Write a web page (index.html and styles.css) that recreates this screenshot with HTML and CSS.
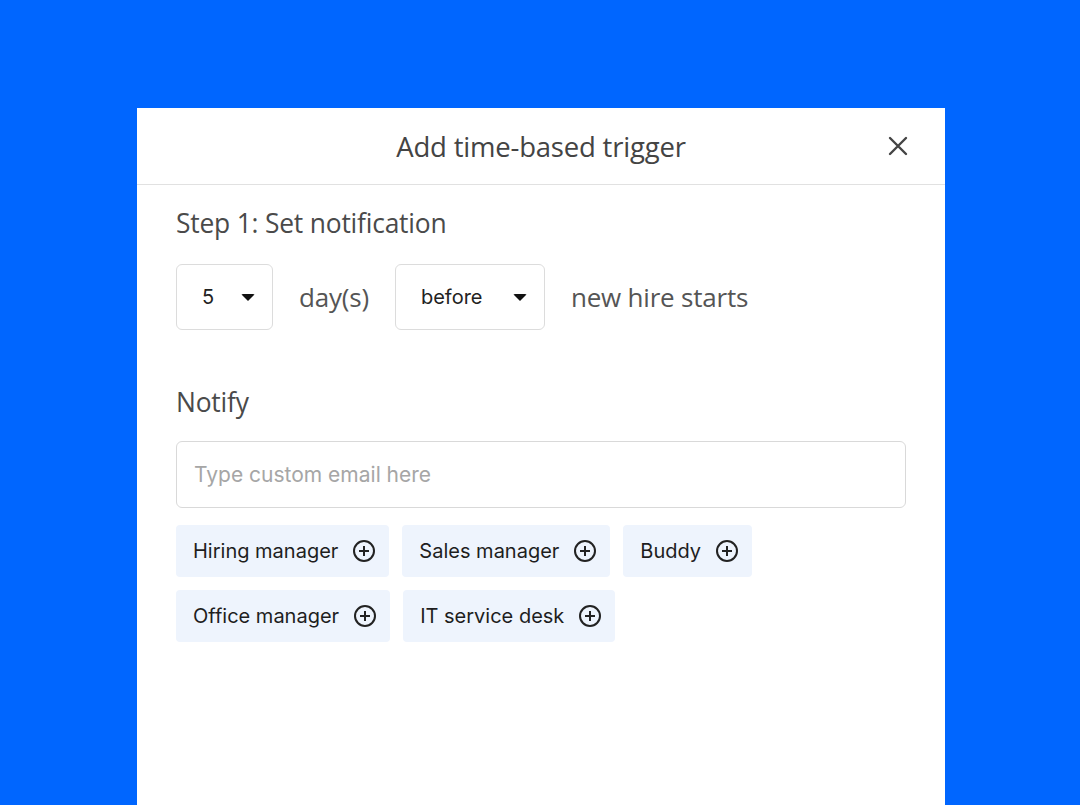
FILE: index.html
```html
<!DOCTYPE html>
<html lang="en">
<head>
  <meta charset="UTF-8">
  <meta name="viewport" content="width=device-width, initial-scale=1.0">
  <title>Add time-based trigger</title>
  <link rel="stylesheet" href="styles.css">
</head>
<body>

  <div class="modal">
    <div class="modal-header">
      <h2>Add time-based trigger</h2>
      <button class="close" aria-label="Close">
        <svg width="20" height="20" viewBox="0 0 20 20"><path d="M2 2L18 18M18 2L2 18" stroke="#444" stroke-width="2.4" stroke-linecap="round"/></svg>
      </button>
    </div>

    <div class="modal-body">
      <h3>Step 1: Set notification</h3>
      <div class="rule">
        <div class="select select-num">
          <span>5</span>
          <span class="caret"></span>
        </div>
        <span class="rule-text">day(s)</span>
        <div class="select select-when">
          <span>before</span>
          <span class="caret"></span>
        </div>
        <span class="rule-text">new hire starts</span>
      </div>

      <h3 class="notify-title">Notify</h3>
      <input class="email" type="text" placeholder="Type custom email here">

      <div class="chips">
        <div class="chip">Hiring manager <span class="plus"></span></div>
        <div class="chip">Sales manager <span class="plus"></span></div>
        <div class="chip">Buddy <span class="plus"></span></div>
        <div class="chip">Office manager <span class="plus"></span></div>
        <div class="chip">IT service desk <span class="plus"></span></div>
      </div>
    </div>
  </div>

</body>
</html>
```

FILE: styles.css
```css
body {
  margin: 0;
  background-color: #0066ff;
  font-family: "Open Sans", sans-serif;
  color: #4a4a4a;
  height: 805px;
  overflow: hidden;
}
.modal {
  background: #fff;
  width: 808px;
  margin: 108px auto 0 137px;
  height: 697px;
}
.modal-header {
  height: 76px;
  border-bottom: 1px solid #e1e1e1;
  display: flex;
  align-items: center;
  justify-content: center;
  position: relative;
}
.modal-header h2 {
  margin: 0;
  font-size: 27.5px;
  font-weight: 400;
  color: #444;
  letter-spacing: -0.2px;
}
.close {
  position: absolute;
  right: 37px;
  top: 28px;
  border: 0;
  background: none;
  padding: 0;
  width: 20px;
  height: 20px;
  cursor: pointer;
}
.close svg {
  display: block;
}
.modal-body {
  padding: 18px 39px 0 39px;
}
h3 {
  margin: 0;
  font-size: 26.4px;
  font-weight: 400;
  color: #4a4a4a;
  line-height: 40px;
  letter-spacing: -0.2px;
}
.rule {
  display: flex;
  align-items: center;
  margin-top: 21px;
  gap: 26px;
}
.select {
  height: 66px;
  border: 1px solid #dcdcdc;
  border-radius: 6px;
  display: flex;
  align-items: center;
  justify-content: space-between;
  padding: 0 17px 0 25px;
  font-family: Inter, sans-serif;
  font-size: 20px;
  color: #222;
  box-sizing: border-box;
}
.select-num {
  width: 97px;
}
.select-when {
  width: 150px;
}
.caret {
  width: 0;
  height: 0;
  border-left: 7px solid transparent;
  border-right: 7px solid transparent;
  border-top: 7px solid #111;
  border-radius: 2px;
}
.rule-text {
  font-size: 26px;
  color: #555;
  letter-spacing: -0.2px;
}
.notify-title {
  margin-top: 52px;
}
.email {
  display: block;
  margin-top: 19px;
  width: 730px;
  height: 67px;
  box-sizing: border-box;
  border: 1px solid #d9d9d9;
  border-radius: 6px;
  padding: 0 17px;
  font-family: Inter, sans-serif;
  font-size: 21px;
  color: #222;
  outline: none;
}
.email::placeholder {
  color: #a6a6a6;
}
.chips {
  display: flex;
  flex-wrap: wrap;
  gap: 13px 13px;
  margin-top: 17px;
  width: 600px;
}
.chip {
  height: 52px;
  background: #eef4fd;
  border-radius: 4px;
  display: flex;
  align-items: center;
  gap: 15px;
  padding: 0 14px 0 17px;
  font-family: Inter, sans-serif;
  font-size: 20px;
  color: #1e1e1e;
}
.plus {
  width: 18px;
  height: 18px;
  border: 2px solid #222;
  border-radius: 50%;
  position: relative;
}
.plus::before,
.plus::after {
  content: "";
  position: absolute;
  background: #222;
  left: 50%;
  top: 50%;
  transform: translate(-50%, -50%);
}
.plus::before {
  width: 10px;
  height: 2px;
}
.plus::after {
  width: 2px;
  height: 10px;
}
```
